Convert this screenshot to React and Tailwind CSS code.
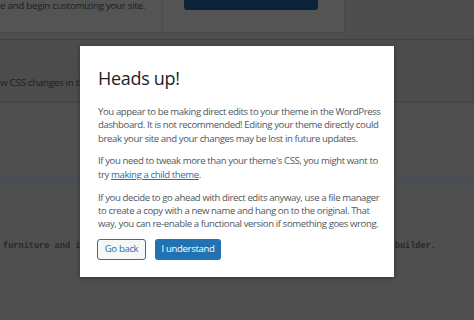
export default function App() {
  return (
    <div className="relative w-[474px] h-[320px] overflow-hidden bg-[#4f4f4f]" style={{ fontFamily: '"Open Sans", "Noto Sans", sans-serif' }}>
      {/* top strip */}
      <div className="h-[40px] bg-[#4e4e4e] border-b border-[#414141]">
        <div className="flex w-[345px] h-[33px] bg-[#545454] border-r border-b border-[#4a4a4a]">
          <div className="w-[163px] border-r border-[#4c4c4c] text-[9.8px] leading-[12px] tracking-[-0.3px] text-[#1e1e1e] whitespace-nowrap overflow-hidden">
            <span>e and begin customizing your site.</span>
          </div>
          <div className="pl-[21px]">
            <div className="w-[134px] h-[10px] bg-[#0b2339] rounded-b-[3px]"></div>
          </div>
        </div>
      </div>
      {/* second section */}
      <div className="h-[63px] bg-[#4c4c4c] border-b-2 border-[#454545] flex">
        <div className="flex-1 pt-[37px] text-[9.8px] leading-[12px] tracking-[-0.3px] text-[#1e1e1e] whitespace-nowrap">
          w CSS changes in the editor
        </div>
        <div className="w-[80px] border-l border-r border-[#464646]"></div>
      </div>
      {/* lower section */}
      <div className="h-[70px]"></div>
      <div className="h-[12px] bg-[#4b4f55]"></div>
      <div className="h-[55px]"></div>
      <div className="flex justify-between pl-[3px] text-[8.6px] leading-[12px] font-bold text-[#2a2824] whitespace-nowrap" style={{ fontFamily: '"Liberation Mono", monospace' }}>
        <span>furniture and interiors</span>
        <span className="pr-[38px]">builder.</span>
      </div>

      {/* modal */}
      <div className="absolute left-[80px] top-[46px] w-[314px] h-[231px] bg-white shadow-[0_1px_4px_rgba(0,0,0,0.4)] px-[18px] pt-[21px]">
        <h1 className="text-[18px] leading-[22px] tracking-[-0.3px] text-[#1d2327] font-normal">Heads up!</h1>
        <div className="mt-[16px] text-[9.6px] leading-[13.3px] tracking-[-0.4px] text-[#50575e] whitespace-nowrap">
          <p>You appear to be making direct edits to your theme in the WordPress<br />dashboard. It is not recommended! Editing your theme directly could<br />break your site and your changes may be lost in future updates.</p>
          <p className="mt-[9.6px]">If you need to tweak more than your theme's CSS, you might want to<br />try <span className="text-[#2271b1] underline">making a child theme</span>.</p>
          <p className="mt-[9.6px]">If you decide to go ahead with direct edits anyway, use a file manager<br />to create a copy with a new name and hang on to the original. That<br />way, you can re-enable a functional version if something goes wrong.</p>
        </div>
        <div className="flex gap-[9px] mt-[8px] -ml-[1px]">
          <button className="h-[21px] w-[49px] border border-[#2271b1] rounded-[3px] text-[9.6px] tracking-[-0.35px] text-[#2271b1] bg-[#f6f7f7] whitespace-nowrap">Go back</button>
          <button className="h-[21px] w-[66px] bg-[#2271b1] rounded-[3px] text-[9.6px] tracking-[-0.35px] text-white whitespace-nowrap">I understand</button>
        </div>
      </div>
    </div>
  );
}
